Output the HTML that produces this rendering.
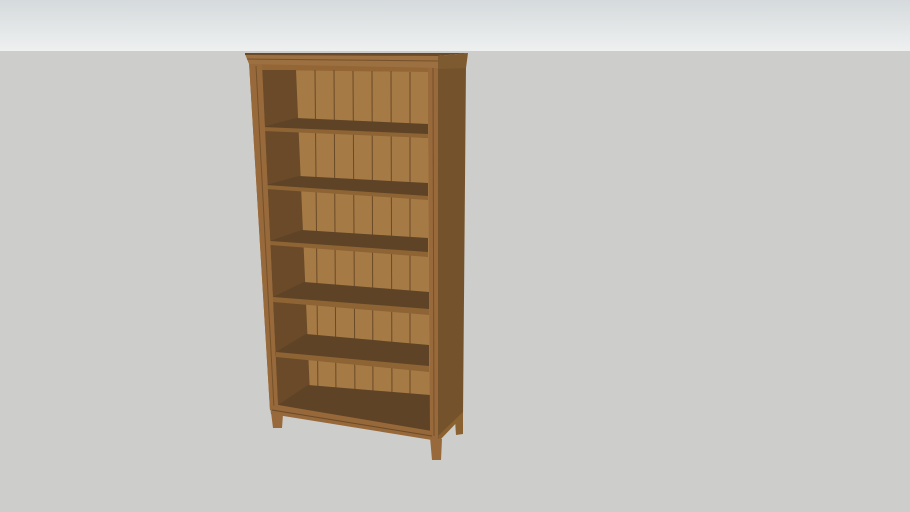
<!DOCTYPE html>
<html><head><meta charset="utf-8"><style>
html,body{margin:0;padding:0;width:910px;height:512px;overflow:hidden;background:#cdcdcb}
svg{display:block}
</style></head><body>
<svg width="910" height="512" viewBox="0 0 910 512" xmlns="http://www.w3.org/2000/svg">
<defs>
<linearGradient id="sky" x1="0" y1="0" x2="0" y2="1">
<stop offset="0" stop-color="#d5dadc"/><stop offset="1" stop-color="#eef0f0"/>
</linearGradient>
</defs>
<rect x="0" y="0" width="910" height="51" fill="url(#sky)"/>
<rect x="0" y="51" width="910" height="461" fill="#cdcdcb"/>

<polygon points="438,66 466,64 463,416 438,440" fill="#74532c"/>
<polygon points="455,420 463,414 463,434 456,435" fill="#8a6232"/>
<polygon points="249,62 438,66 438,440 270,410" fill="#946636"/>
<polygon points="262,70 428,72 430,430 278,405" fill="#a57a45"/>
<polygon points="262,70 296,70 310,395 278,405" fill="#6a4a28"/>
<g stroke="#6a4a28" stroke-width="1">
<line x1="315" y1="70" x2="318" y2="400"/>
<line x1="334" y1="70" x2="336" y2="402"/>
<line x1="353" y1="71" x2="355" y2="404"/>
<line x1="372" y1="71" x2="373" y2="406"/>
<line x1="391" y1="71" x2="392" y2="408"/>
<line x1="410" y1="72" x2="410" y2="410"/>
</g>
<g>
<polygon points="263,127 296,118 428,124 428,138" fill="#5e4326"/>
<polygon points="263,127 428,134 428,138 263,131" fill="#8e6434"/>
<polygon points="266,185 299,176 428,183 428,197" fill="#5e4326"/>
<polygon points="266,185 428,196 428,200 266,189" fill="#8e6434"/>
<polygon points="270,241 302,230 428,238 428,254" fill="#5e4326"/>
<polygon points="270,241 428,252 428,257 270,245" fill="#8e6434"/>
<polygon points="273,297 304,282 429,292 429,312" fill="#5e4326"/>
<polygon points="273,297 429,309 429,315 273,302" fill="#8e6434"/>
<polygon points="276,352 306,334 429,345 429,369" fill="#5e4326"/>
<polygon points="276,352 429,366 429,372 276,357" fill="#8e6434"/>
<polygon points="278,405 308,385 430,395 430,432" fill="#5e4326"/>
</g>
<polygon points="249,62 262,64 278,408 270,410" fill="#98693a"/>
<line x1="256" y1="66" x2="274" y2="408" stroke="#74512a" stroke-width="1"/>
<polygon points="428,66 438,66 438,440 430,436" fill="#98693a"/>
<line x1="433" y1="68" x2="434" y2="436" stroke="#74512a" stroke-width="1"/>
<polygon points="270,406 278,405 432,431 432,440 271,414" fill="#96683a"/>
<line x1="272" y1="410" x2="432" y2="436" stroke="#6a4a28" stroke-width="1"/>
<polygon points="438,436 463,412 463,416 440,440" fill="#8a6232"/>
<polygon points="271,412 283,414 282,428 273,428" fill="#98693a"/>
<polygon points="430,437 442,439 441,460 432,460" fill="#98693a"/>
<polygon points="245,54 438,56 438,68 249,64" fill="#9c7040"/>
<line x1="247" y1="59" x2="438" y2="61" stroke="#74512a" stroke-width="1"/>
<polygon points="438,56 468,53 466,68 438,69" fill="#7e5a30"/>
<polygon points="245,53 468,53 438,56 245,55" fill="#6a4a28"/>
</svg>
</body></html>
